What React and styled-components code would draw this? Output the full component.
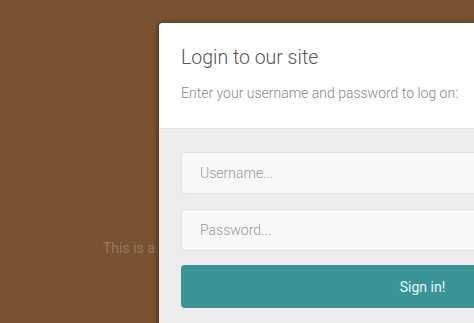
import React from "react";
import styled, { createGlobalStyle } from "styled-components";

const Global = createGlobalStyle`
  html, body { margin: 0; padding: 0; }
  body {
    background: #7a5231;
    font-family: Roboto, "Liberation Sans", Arial, sans-serif;
    overflow: hidden;
  }
`;

const Page = styled.div`
  position: relative;
  width: 474px;
  height: 323px;
  overflow: hidden;
  background: #7a5231;
`;

const Backdrop = styled.div`
  display: flex;
  flex-direction: column;
  align-items: flex-start;
  padding: 240px 0 0 103px;
`;

const BackText = styled.p`
  margin: 0;
  font-size: 14px;
  color: #98795d;
  white-space: nowrap;
`;

const Modal = styled.div`
  position: absolute;
  left: 159px;
  top: 23px;
  width: 527px;
  border-radius: 4px;
  overflow: hidden;
  box-shadow: -2px 0 5px rgba(0, 0, 0, 0.35);
  background: #ededed;
`;

const Header = styled.div`
  background: #ffffff;
  padding: 20px 22px 0;
  height: 106px;
  box-sizing: border-box;
  border-bottom: 1px solid #e4e4e4;
`;

const Title = styled.h3`
  margin: 0;
  font-size: 19.5px;
  font-weight: 300;
  color: #555;
  line-height: 30px;
`;

const Sub = styled.p`
  margin: 10px 0 0;
  font-size: 14px;
  font-weight: 300;
  color: #888;
  line-height: 20px;
`;

const Body = styled.form`
  display: flex;
  flex-direction: column;
  gap: 15px;
  padding: 23px 22px 20px;
`;

const Input = styled.input`
  box-sizing: border-box;
  height: 42px;
  width: 100%;
  border: 1px solid #e2e2e2;
  border-radius: 4px;
  background: #f8f8f8;
  padding: 0 18px;
  font-family: inherit;
  font-size: 14px;
  font-weight: 300;
  color: #555;
  outline: none;
  &::placeholder { color: #999; }
`;

const Button = styled.button`
  box-sizing: border-box;
  height: 43px;
  width: 100%;
  margin-top: -1px;
  border: none;
  border-radius: 4px;
  background: #3a9497;
  color: #e8f6f6;
  font-family: inherit;
  font-size: 14px;
  font-weight: 400;
  cursor: pointer;
`;

export default function App() {
  return (
    <>
      <Global />
      <Page>
        <Backdrop>
          <BackText>This is a top login form with a modal popup</BackText>
        </Backdrop>
        <Modal>
          <Header>
            <Title>Login to our site</Title>
            <Sub>Enter your username and password to log on:</Sub>
          </Header>
          <Body onSubmit={(e) => e.preventDefault()}>
            <Input type="text" placeholder="Username..." />
            <Input type="password" placeholder="Password..." />
            <Button type="submit">Sign in!</Button>
          </Body>
        </Modal>
      </Page>
    </>
  );
}
